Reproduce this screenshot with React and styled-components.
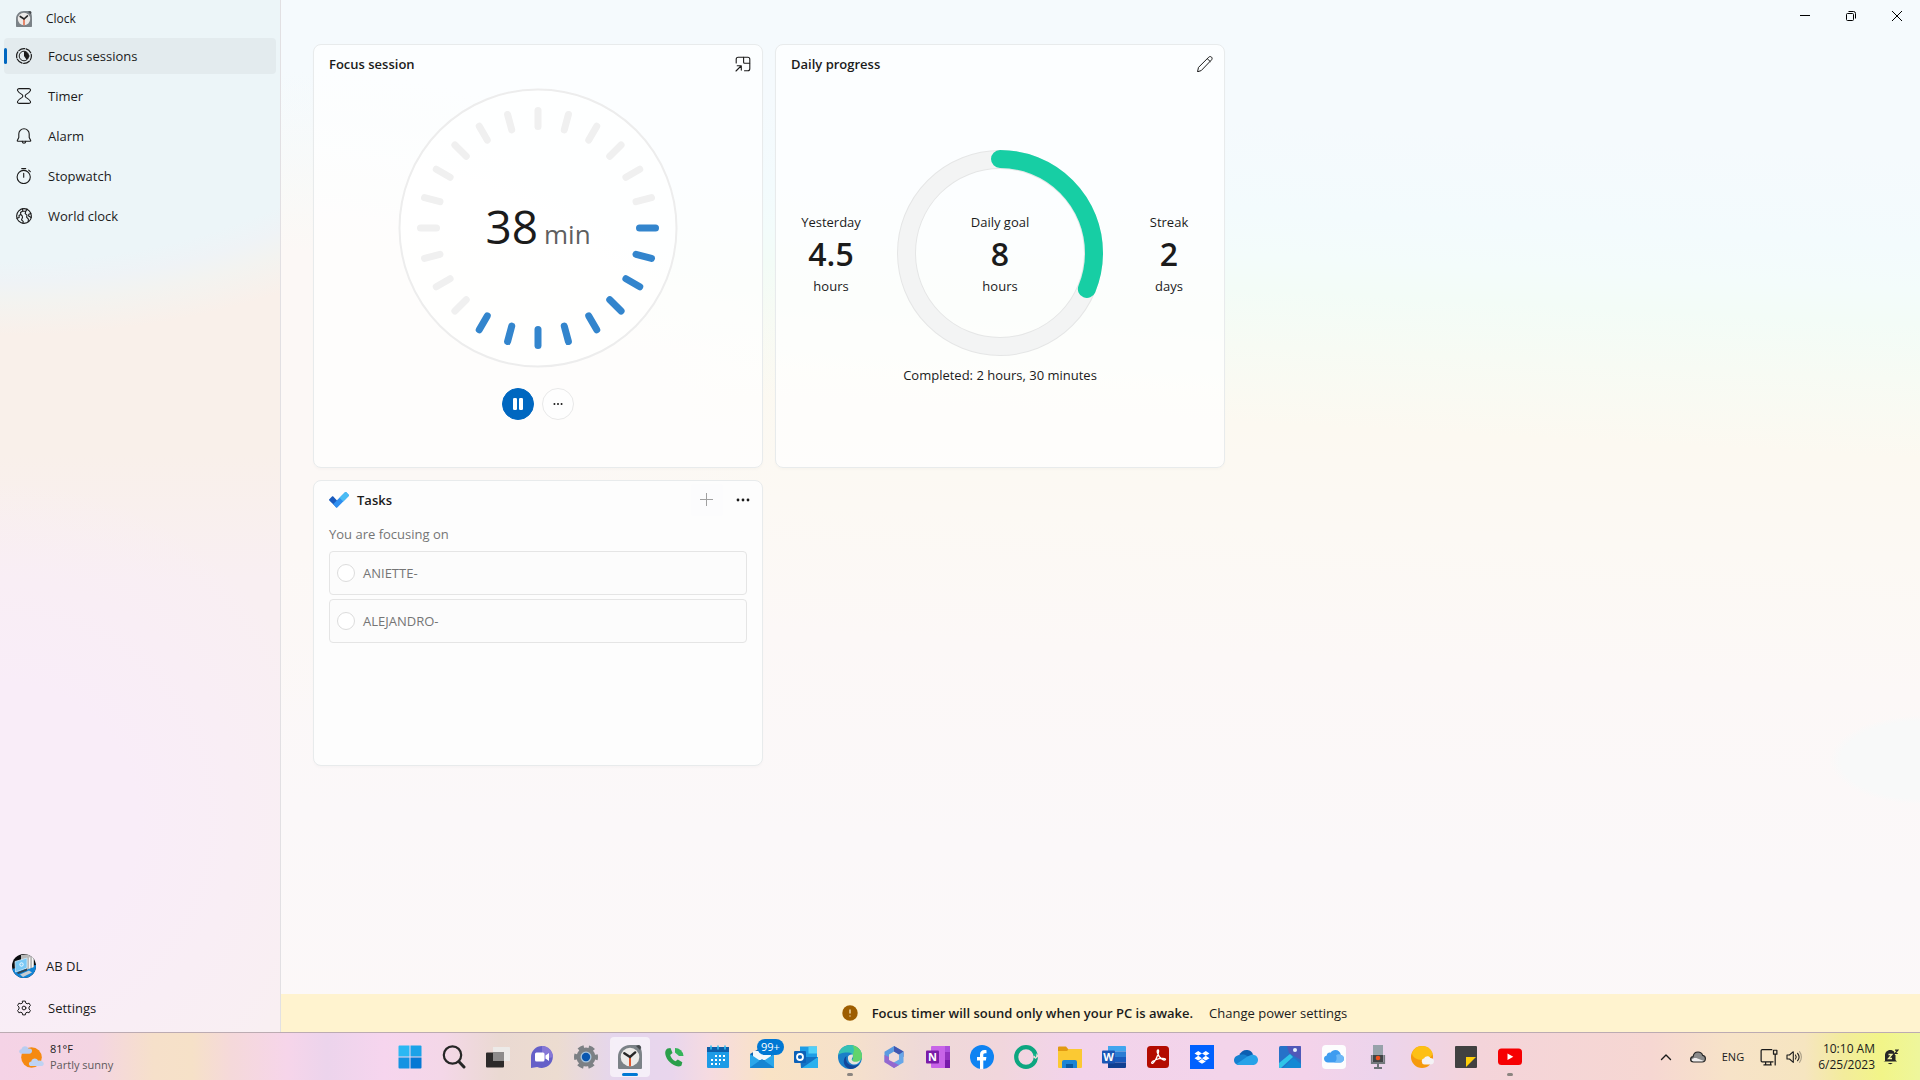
import React from "react"
import styled, { createGlobalStyle } from "styled-components"

const GlobalStyle = createGlobalStyle`
  * {
    box-sizing: border-box;
  }

  body {
    margin: 0;
    font-family: "Open Sans", "Noto Sans", sans-serif;
    font-size: 13px;
    line-height: 20px;
    color: #1b1b1b;
  }

  button {
    font: inherit;
    color: inherit;
    background: none;
    border: none;
    padding: 0;
    cursor: pointer;
  }

  svg {
    display: block;
    flex: none;
  }
`

const Desktop = styled.div`
  min-height: 100vh;
  display: flex;
  flex-direction: column;
`

const AppWindow = styled.div`
  flex: 1;
  display: grid;
  grid-template-columns: 281px 1fr;
`

/* sidebar */

const Sidebar = styled.aside`
  display: flex;
  flex-direction: column;
  padding-bottom: 6px;
  border-right: 1px solid #e2e0e3;
  background: radial-gradient(
      ellipse 560px 335px at 10px 0,
      #ecf5f8 0%,
      #ecf5f8 78%,
      #eff3f6 84%,
      #f3f3f0 90%,
      rgba(249, 240, 235, 0) 100%
    ),
    radial-gradient(
      circle 340px at 0 820px,
      #f9edf8 0%,
      #f9edf8 40%,
      rgba(249, 239, 243, 0) 100%
    ),
    linear-gradient(#f9f0ea 0%, #f9f0ea 44%, #f9eff2 56%, #f9eff2 100%);
`

const AppTitle = styled.div`
  display: flex;
  align-items: center;
  gap: 14px;
  height: 38px;
  padding-left: 16px;
  font-size: 12px;
`

const Nav = styled.nav`
  flex: 1;
  display: flex;
  flex-direction: column;
  gap: 4px;
  padding: 0 4px;
`

const NavItem = styled.a`
  position: relative;
  display: flex;
  align-items: center;
  gap: 16px;
  height: 36px;
  padding-left: 12px;
  border-radius: 4px;
  color: inherit;
  text-decoration: none;
  background: ${props => (props.$active ? "#e3ebee" : "transparent")};

  &::before {
    content: "";
    display: ${props => (props.$active ? "block" : "none")};
    position: absolute;
    left: 0;
    top: 10px;
    width: 3px;
    height: 16px;
    border-radius: 2px;
    background: #0067c0;
  }
`

const SidebarFooter = styled.div`
  display: flex;
  flex-direction: column;
  gap: 6px;
  padding: 0 4px;
`

const Profile = styled.button`
  display: flex;
  align-items: center;
  gap: 10px;
  height: 36px;
  padding-left: 8px;
  text-align: left;
`

/* main area */

const Main = styled.main`
  display: flex;
  flex-direction: column;
  background: radial-gradient(
      ellipse 90px 44px at 100% 760px,
      #f8f9f9 0%,
      #f8f9f9 88%,
      rgba(248, 249, 249, 0) 100%
    ),
    radial-gradient(
      ellipse 520px 330px at 0 400px,
      #fcf8f6 0%,
      #fcf8f6 45%,
      rgba(252, 248, 246, 0) 100%
    ),
    linear-gradient(
      183deg,
      #f5fafd 0%,
      #f5fafd 14%,
      #f3fbfd 22%,
      #f3fcfb 26%,
      #f3fcf7 29%,
      #f7fbf4 34%,
      #fcf9f1 41%,
      #fcf9f4 50%,
      #fcf8f7 62%,
      #fbf8f9 80%,
      #fcf8f8 100%
    );
`

const TitleBar = styled.header`
  display: flex;
  justify-content: flex-end;
  height: 32px;
`

const CaptionButton = styled.button`
  width: 46px;
  height: 32px;
  display: grid;
  place-items: center;
`

const Cards = styled.div`
  flex: 1;
  display: grid;
  grid-template-columns: repeat(auto-fit, 450px);
  grid-auto-rows: max-content;
  gap: 12px;
  max-width: 980px;
  padding: 12px 32px;
`

const CardStyled = styled.section`
  display: flex;
  flex-direction: column;
  min-height: ${props => (props.$compact ? "286px" : "424px")};
  border: 1px solid #e8ebec;
  border-radius: 8px;
  background: ${props =>
    props.$compact ? "#fdfdfd" : "rgba(255, 255, 255, 0.7)"};
  box-shadow: 0 2px 3px rgba(0, 0, 0, 0.02);
`

const CardHeader = styled.div`
  display: flex;
  align-items: center;
  height: 38px;
  padding: 0 3px 0 15px;
`

const CardTitle = styled.h2`
  flex: 1;
  display: flex;
  align-items: center;
  gap: 8px;
  margin: 0;
  font-size: 13px;
  font-weight: 600;
`

const SquareButton = styled.button`
  width: 32px;
  height: 32px;
  margin-left: 4px;
  display: grid;
  place-items: center;
  border-radius: 4px;
  background: ${props => (props.$subtle ? "#fcfcfd" : "transparent")};
`

const Dial = styled.div`
  display: grid;
  place-items: center;
  margin-top: 5px;

  > * {
    grid-area: 1 / 1;
  }
`

const TimeLeft = styled.div`
  display: flex;
  align-items: baseline;
  gap: 6px;
  padding-top: 4px;
  font-size: 46px;
  line-height: 60px;
`

const TimeUnit = styled.span`
  font-size: 26px;
  color: #5f5f5f;
`

const DialControls = styled.div`
  display: flex;
  justify-content: center;
  gap: 8px;
  margin-top: 20px;
`

const RoundButton = styled.button`
  width: 32px;
  height: 32px;
  display: grid;
  place-items: center;
  border-radius: 50%;
  border: 1px solid ${props => (props.$primary ? "#0067c0" : "#e9e9e9")};
  background: ${props => (props.$primary ? "#0067c0" : "#fefefe")};
`

const ProgressRow = styled.div`
  display: flex;
  justify-content: space-between;
  align-items: center;
  margin-top: 67px;
  padding: 0 11px;
`

const Stat = styled.div`
  width: 88px;
  padding-top: 2px;
  text-align: center;
`

const StatValue = styled.div`
  font-size: 32px;
  font-weight: 600;
  line-height: 44px;
`

const Ring = styled.div`
  display: grid;
  place-items: center;

  > * {
    grid-area: 1 / 1;
  }
`

const Completed = styled.p`
  margin: 9px 0 0;
  text-align: center;
`

const FocusingOn = styled.p`
  margin: 5px 15px 7px;
  color: #757575;
`

const TaskList = styled.ul`
  display: flex;
  flex-direction: column;
  gap: 4px;
  margin: 0;
  padding: 0 15px;
  list-style: none;
`

const TaskRow = styled.label`
  display: flex;
  align-items: center;
  gap: 8px;
  height: 44px;
  padding-left: 7px;
  border: 1px solid #e5e5e5;
  border-radius: 4px;
  background: #fcfcfc;
  color: #757575;
`

const TaskCheck = styled.input.attrs({ type: "checkbox" })`
  appearance: none;
  width: 18px;
  height: 18px;
  margin: 0;
  border: 1px solid #dcdcdc;
  border-radius: 50%;
  background: #fff;
`

const InfoBar = styled.div`
  display: flex;
  align-items: center;
  justify-content: center;
  gap: 16px;
  height: 38px;
  padding-right: 12px;
  background: #fff3cf;
`

const InfoMessage = styled.strong`
  display: flex;
  align-items: center;
  gap: 14px;
  font-weight: 600;
`

/* taskbar */

const TaskbarStyled = styled.footer`
  display: grid;
  grid-template-columns: 1fr auto 1fr;
  align-items: center;
  height: 48px;
  border-top: 1px solid #bcabb2;
  font-size: 11px;
  line-height: 16px;
  background: linear-gradient(
    90deg,
    #f5d3e6 0%,
    #f4d5e2 5%,
    #f6e0ca 8%,
    #f6e1c8 10%,
    #f5d9da 12%,
    #f6d5ea 15%,
    #ecd4ec 17%,
    #f6d5ee 20%,
    #f4d7e8 23%,
    #ead9d2 26%,
    #ecdcd0 29%,
    #e5d6ed 32%,
    #e9d6ed 35%,
    #f6dbe0 37%,
    #f9e3c5 40%,
    #f6e1ca 44%,
    #eed9d8 48%,
    #f1d6dc 52%,
    #f2d3eb 56%,
    #f3d4ea 64%,
    #f4d3ea 68%,
    #ecd4ec 72%,
    #f4d4da 77%,
    #f6d7d2 86%,
    #f7e3c8 90%,
    #f6e5c0 94%,
    #f3ec9c 96%,
    #f2f588 98%,
    #eef69c 100%
  );
`

const Weather = styled.button`
  display: flex;
  align-items: center;
  gap: 6px;
  padding-left: 18px;
  line-height: 16px;
  text-align: left;
`

const Muted = styled.div`
  color: #5f5a5c;
`

const AppStrip = styled.div`
  display: flex;
  gap: 4px;
`

const AppButton = styled.button`
  position: relative;
  width: 40px;
  height: 40px;
  display: grid;
  place-items: center;
  border-radius: 4px;
  background: ${props =>
    props.$active ? "rgba(255, 255, 255, 0.6)" : "transparent"};

  &::after {
    content: "";
    display: ${props => (props.$active || props.$running ? "block" : "none")};
    position: absolute;
    bottom: 1px;
    left: 50%;
    width: ${props => (props.$active ? "16px" : "6px")};
    height: 3px;
    border-radius: 2px;
    transform: translateX(-50%);
    background: ${props => (props.$active ? "#0078d4" : "#8b8580")};
  }
`

const Badge = styled.span`
  position: absolute;
  top: 2px;
  left: 15px;
  padding: 0 4px;
  border-radius: 8px;
  background: #0078d4;
  color: #fff;
  font-size: 11px;
  line-height: 16px;
`

const Tray = styled.div`
  display: flex;
  justify-content: flex-end;
  align-items: center;
  padding-right: 13px;
`

const TrayButton = styled.button`
  display: flex;
  align-items: center;
  gap: 8px;
  padding: 0 8px;
  line-height: 16px;
`

const DateTime = styled.div`
  font-size: 12px;
  text-align: right;
`

/* line icons */

const LineIcon = ({ size = 16, width = 1, children }) => (
  <svg
    width={size}
    height={size}
    viewBox="0 0 16 16"
    fill="none"
    stroke="currentColor"
    strokeWidth={width}
    strokeLinecap="round"
    strokeLinejoin="round"
    aria-hidden="true"
  >
    {children}
  </svg>
)

const FocusIcon = () => (
  <LineIcon>
    <circle cx="8" cy="8" r="7.4" strokeDasharray="6.2 1.55" strokeDashoffset="2" strokeWidth="1.2" />
    <circle cx="8" cy="8" r="4.8" />
    <path d="M8 3.5a4.5 4.5 0 0 1 2.6 8.2L8 8z" fill="currentColor" stroke="none" />
  </LineIcon>
)

const TimerIcon = () => (
  <LineIcon width="1.1">
    <path d="M3.5.6h9c1.9 0 2.300 1 1.900 2-.6 1.600-2.500 2.800-4.500 4-.9.6-.9 2.200 0 2.800 2 1.200 3.900 2.400 4.500 4 .4 1 0 2-1.900 2h-9c-1.900 0-2.300-1-1.900-2 .6-1.600 2.500-2.800 4.500-4 .9-.6.900-2.200 0-2.800-2-1.200-3.900-2.400-4.500-4-.4-1 0-2 1.900-2z" />
  </LineIcon>
)

const BellIcon = () => (
  <LineIcon width="1.1">
    <path d="M8 .8C5 .8 2.800 3.100 2.800 6v3.500l-1.500 3.100c-.1.300 0 .6.400.6h12.600c.4 0 .5-.3.400-.6l-1.500-3.100V6C13.200 3.100 11 .8 8 .8z" />
    <path d="M6.200 13.400c.2 1.300 1 1.900 1.800 1.900s1.600-.6 1.800-1.900" />
  </LineIcon>
)

const StopwatchIcon = () => (
  <LineIcon width="1.1">
    <circle cx="7.7" cy="9" r="6.6" />
    <path d="M5.700.6h4M7.700 5.300v4M12.700 2.200l1.600 1.500" />
  </LineIcon>
)

const WorldIcon = () => (
  <LineIcon width="1.1">
    <circle cx="8" cy="8" r="7.4" />
    <path d="M6.500.9l.3 2.100L4.500 4.500 4.800 6.500 3 7.500l.2 2-2.300.8M6.800 3l3 .2 1.200-2M9.800 3.200l-.6 2.400 1.800 1.600-.4 2 1.800 2-.2 2.500M14.800 5.500l-2 .8-.2 1.700 2.600 1.500M6.900 15.300l.3-2-1.700-1.400 1-2.400-.3-1.700-1.400-1.300" />
  </LineIcon>
)

const GearIcon = () => (
  <LineIcon>
    <circle cx="8" cy="8" r="1.900" />
    <path d="M6.700 1.100h2.600l.5 2 1.300.7 2-.6 1.300 2.300L13 7v2l1.400 1.500-1.300 2.300-2-.6-1.300.7-.5 2H6.700l-.5-2-1.300-.7-2 .6-1.300-2.300L3 9V7L1.600 5.500l1.300-2.300 2 .6 1.300-.7z" />
  </LineIcon>
)

const CompactIcon = () => (
  <LineIcon width="1.1">
    <path d="M1.200 7V3.200c0-1.200.8-2 2-2h9.600c1.200 0 2 .8 2 2v9.600c0 1.200-.8 2-2 2H9.500" />
    <path d="M8.600 1.400v4.800c0 .6.400 1 1 1h5M1 15l5-5M2.200 9.700h4.100v4.400" />
  </LineIcon>
)

const PencilIcon = () => (
  <LineIcon>
    <path d="M.6 15.400l.9-4L11.700 1.200c.8-.8 2-.8 2.800-.1.800.8.8 2 0 2.800L4.500 14.300zM10.300 2.700l2.900 2.800" />
  </LineIcon>
)

const Dots = ({ size }) => (
  <svg width={size} height="4" viewBox="0 0 14 4" fill="#1b1b1b" aria-hidden="true">
    <circle cx="2" cy="2" r="1.4" />
    <circle cx="7" cy="2" r="1.4" />
    <circle cx="12" cy="2" r="1.4" />
  </svg>
)

/* drawn logos */

const ClockLogo = ({ size = 24 }) => (
  <svg width={size} height={size} viewBox="0 0 24 24" aria-hidden="true">
    <path d="M0 12C0 5 5 0 12 0h9a3 3 0 0 1 2 4c1 2 1 5 1 8v11a1 1 0 0 1-1 1H1a1 1 0 0 1-1-1z" fill="#7b8287" />
    <path d="M18 1l3-1 2 2-1 3z" fill="#45494c" />
    <circle cx="12" cy="12" r="9.3" fill="#eceae8" />
    <path d="M11 12h2v8.500a1 1 0 0 1-2 0z" fill="#e2552d" />
    <path d="M6.300 8.200 12 12l5.200-4.600" fill="none" stroke="#262626" strokeWidth="2.4" strokeLinecap="round" />
  </svg>
)

const ToDoLogo = () => (
  <svg width="20" height="16" viewBox="0 0 20 16" aria-hidden="true">
    <path d="M.3 7.200 3 4.500c.4-.4.900-.4 1.300 0l6.700 7.200-3.500 3.700L.3 8.500c-.4-.4-.4-.9 0-1.300z" fill="#195abd" />
    <path d="M4.200 12 16 .3c.4-.4.900-.4 1.300 0l2.400 2.400c.4.4.4.9 0 1.300L8.300 15.500c-.4.4-.9.4-1.300 0z" fill="#2f8ff0" />
    <path d="M10.500 5.800 16 .3c.4-.4.900-.4 1.300 0l2.400 2.400c.4.4.4.9 0 1.300l-5.400 5.500z" fill="#4bbcf4" />
  </svg>
)

const Avatar = () => (
  <svg width="24" height="24" viewBox="0 0 24 24" aria-hidden="true">
    <defs>
      <clipPath id="avatar">
        <circle cx="12" cy="12" r="12" />
      </clipPath>
    </defs>
    <g clipPath="url(#avatar)">
      <rect width="24" height="24" fill="#0b0d10" />
      <path d="M0 15l8-2 16-2v13H0z" fill="#1183d6" />
      <path d="M9 1l8-1 5 3v10l-8 3-5-4z" fill="#b9b9b9" />
      <path d="M17 3.500l1.200-.3v11l-1.200.4zM20 3l1.200-.3v10.500l-1.200.4z" fill="#f6f6f6" />
      <path d="M3 7.500 15 4v10L3.500 18z" fill="#79c8f5" stroke="#d5e8f4" strokeWidth=".8" />
      <circle cx="9.5" cy="10.5" r="1.7" fill="none" stroke="#eef8ff" />
      <path d="M5 18.500 15 14.500v2L6 20z" fill="#34454f" />
      <path d="M8 20.500l9-4 3 2-9 4.500z" fill="#c7ccd1" />
    </g>
  </svg>
)

const logos = {
  windows: (
    <>
      <path d="M.5 1.500a1 1 0 0 1 1-1h10v11H.5z" fill="#2bb8f3" />
      <path d="M12.500.5h10a1 1 0 0 1 1 1v10h-11z" fill="#1ba2e8" />
      <path d="M.5 12.500h11v11h-10a1 1 0 0 1-1-1z" fill="#1593e2" />
      <path d="M12.500 12.500h11v10a1 1 0 0 1-1 1h-10z" fill="#0578d4" />
    </>
  ),
  search: (
    <g fill="none" stroke="#262626" strokeLinecap="round">
      <circle cx="10.5" cy="10" r="8.7" strokeWidth="2.2" />
      <path d="M17 16.700l5 5.300" strokeWidth="3" />
    </g>
  ),
  taskView: (
    <>
      <path d="M7 2h16a1 1 0 0 1 1 1v13H7z" fill="#eceae8" />
      <path d="M0 8.500a1 1 0 0 1 1-1h17v14a1 1 0 0 1-1 1H1a1 1 0 0 1-1-1z" fill="#2c2a2a" />
      <path d="M7 7.500h11V16H7z" fill="#8d8b8b" />
    </>
  ),
  chat: (
    <>
      <path d="M12 1a11 11 0 1 1-4.800 21L1 23V12A11 11 0 0 1 12 1z" fill="#6560c8" />
      <path d="M12 1a11 11 0 0 1 11 11l-11 3z" fill="#8577d6" />
      <rect x="5" y="7.5" width="9.5" height="9" rx="1.5" fill="#fff" />
      <path d="M15.500 10.500l3.500-2.500v8l-3.500-2.500z" fill="#fff" />
    </>
  ),
  settings: (
    <>
      <circle cx="12" cy="12" r="7" fill="none" stroke="#7c8084" strokeWidth="5" />
      <circle cx="12" cy="12" r="10.3" fill="none" stroke="#7c8084" strokeWidth="3.4" strokeDasharray="5.8 4.986" strokeDashoffset="2.9" />
      <circle cx="12" cy="12" r="5.5" fill="#a9c4dc" />
      <circle cx="12" cy="12" r="4.2" fill="#0a57b0" />
    </>
  ),
  phone: (
    <>
      <path d="M5.500 3.500 8.500 3l2 5-2.300 2c.8 3 2.600 5 5.300 6.300l2.300-1.800 4.500 2.800-.8 3.200c-1.300 1-3.500 1.300-6 .3C7.500 18.500 3.500 13 3.200 8c0-2 .9-3.700 2.300-4.500z" fill="#2b9f4b" />
      <path d="M13 3a8.500 8.500 0 0 1 8.500 8H17l-4-3.500z" fill="#34b45a" />
    </>
  ),
  calendar: (
    <>
      <path d="M1 3h22v19a1 1 0 0 1-1 1H2a1 1 0 0 1-1-1z" fill="#1e9be6" />
      <path d="M1 2h22v5H1z" fill="#0e5ea8" />
      <path d="M5 .5v4M12 .5v4M19 .5v4" stroke="#35bdf0" strokeWidth="1.6" />
      <path d="M9 11h10M5 15h14M5 19h9" stroke="#fff" strokeWidth="2" strokeDasharray="2 2" />
    </>
  ),
  mail: (
    <>
      <path d="M0 9 12 2l12 7v13a1 1 0 0 1-1 1H1a1 1 0 0 1-1-1z" fill="#0f62ae" />
      <path d="M3 6h18v9H3z" fill="#f4f8fb" />
      <path d="M0 9l12 8 12-8v13a1 1 0 0 1-1 1H1a1 1 0 0 1-1-1z" fill="#2ba7ea" />
      <path d="M0 22.500 12 14l12 8.500-1 .5H1z" fill="#1585d2" />
    </>
  ),
  outlook: (
    <>
      <path d="M6 1.500h17v13H6z" fill="#1e9de6" />
      <path d="M14.500 1.500H23v7h-8.500z" fill="#50d0f8" />
      <path d="M6 12h18v10a1 1 0 0 1-1 1H7z" fill="#1372c4" />
      <path d="M24 12v11L8 23z" fill="#2ab0ee" />
      <rect y="6" width="12" height="12" rx="1" fill="#0c61b8" />
      <circle cx="6" cy="12" r="3" fill="none" stroke="#fff" strokeWidth="1.8" />
    </>
  ),
  edge: (
    <>
      <circle cx="12" cy="12" r="12" fill="#1a7fc8" />
      <path d="M.3 10C1.500 3.500 6.500 0 12 0c7 0 12 5 12 11 0 4-3 6-6.500 6-2.500 0-4-1-3-2.500 2-3 .5-7-4-7C6 7.500 2 8 .3 10z" fill="#35c1b4" />
      <path d="M14 .2c6 1 10 5.500 10 10.800 0 4-3 6-6.500 6-2.500 0-4-1-3-2.500 1-1.500 1-3.500.2-5C16 7 17 3 14 .2z" fill="#62d36c" />
      <path d="M8.500 11c-1.500 5 1.500 9.500 7 9.500 2.500 0 4.500-.6 6-1.500A12 12 0 0 1 12 24C5 22 4 14 8.500 11z" fill="#12479a" />
      <path d="M14.700 9.500c1 3-1.700 4-.7 5.700 1.200 2 6 2.300 8.500-.2-1 3-4 5-7 4.500-4-.5-6-4-5.500-7.500.3-1.600 2-2.800 4.700-2.500z" fill="#e8e3dd" />
    </>
  ),
  m365: (
    <>
      <path d="M12 1 21.500 6.500 17 9.500l-5-3-5 3v6L2.500 17V6.700z" fill="#5a9be0" />
      <path d="M12 1l9.500 5.500V12L17 9.500l-5-3z" fill="#4257b0" />
      <path d="M21.500 6.500v11L12 23l-4.500-3 9.500-5.500v-5z" fill="#67a7e8" />
      <path d="M2.500 10v7.300L12 23l5-3-10-5v-3z" fill="#9468cf" />
      <circle cx="12" cy="12" r="3.9" fill="#efdcdc" />
    </>
  ),
  onenote: (
    <>
      <rect x="5" y="1" width="19" height="22" rx="1" fill="#c864e8" />
      <path d="M19 1h5v6h-5z" fill="#ad4fdc" />
      <path d="M19 7h5v8h-5z" fill="#9332bf" />
      <path d="M19 15h5v8h-5z" fill="#7719aa" />
      <rect y="5.5" width="13" height="13" rx="1" fill="#7a1ba8" />
      <text x="6.5" y="16" textAnchor="middle" fontSize="11" fontWeight="700" fill="#fff">
        N
      </text>
    </>
  ),
  facebook: (
    <>
      <circle cx="12" cy="12" r="12" fill="#0f83f2" />
      <path d="M10 24v-8.500H7V12h3V9.500C10 6.500 11.800 5 14.500 5c1 0 2 .2 2 .2v3h-1.400c-1.400 0-1.800.8-1.800 1.700V12h3.100l-.5 3.500h-2.600V24z" fill="#fff" />
    </>
  ),
  sync: (
    <>
      <circle cx="12" cy="12" r="9.8" fill="none" stroke="#0da680" strokeWidth="4.2" />
      <path d="M19 12l3.500-3.500L25 11l-3.500 3z" fill="#f0dcda" />
      <path d="M18.500 8.500l4 .2-.6 3.800z" fill="#12b78e" />
    </>
  ),
  explorer: (
    <>
      <path d="M0 2.500a1 1 0 0 1 1-1h7l2.500 3H24V8H0z" fill="#e29a12" />
      <path d="M0 6h9l2-2h12a1 1 0 0 1 1 1v17a1 1 0 0 1-1 1H1a1 1 0 0 1-1-1z" fill="#fbc933" />
      <path d="M4 23v-6a2 2 0 0 1 2-2h11a2 2 0 0 1 2 2v6z" fill="#1c84d4" />
      <path d="M8 23v-4h7v4z" fill="#0a5aa0" />
    </>
  ),
  word: (
    <>
      <path d="M6 1h17a1 1 0 0 1 1 1v4.500H6z" fill="#41a5ee" />
      <path d="M6 6.500h18V12H6z" fill="#2b7cd3" />
      <path d="M6 12h18v5.500H6z" fill="#185abd" />
      <path d="M6 17.500h18V22a1 1 0 0 1-1 1H6z" fill="#103f91" />
      <rect y="5.5" width="13" height="13" rx="1" fill="#1a56b5" />
      <text x="6.5" y="16" textAnchor="middle" fontSize="11" fontWeight="700" fill="#fff">
        W
      </text>
    </>
  ),
  acrobat: (
    <>
      <rect x="1" y="1" width="22" height="22" rx="3.5" fill="#b30b00" />
      <path d="M12 5c-2 0 0 6 3 8.500 2 1.700 4.500 2 4.500.8 0-1.500-6-1-9 .2-3 1-5.500 2.600-4.800 3.700.8 1 3-1.700 4.500-4.700C12 10 13.500 5 12 5z" fill="none" stroke="#fff" strokeWidth="1.3" />
    </>
  ),
  dropbox: (
    <>
      <rect width="24" height="24" fill="#0061fe" />
      <path d="M8.200 6 4.500 8.400l3.700 2.400L12 8.400zm7.600 0L12 8.400l3.800 2.400 3.700-2.400zM8.200 10.800l-3.700 2.400 3.700 2.400 3.800-2.400zm7.600 0L12 13.200l3.800 2.400 3.700-2.400zM8.200 16.400l3.800 2.400 3.800-2.400L12 14z" fill="#fff" />
    </>
  ),
  onedrive: (
    <>
      <path d="M5 10.500C6.500 6.500 10 4.500 13.500 5c3 .5 4.700 2 5.500 4.500l-5 4z" fill="#0c5fb2" />
      <path d="M6 10c2.500-.8 5-.3 7 1l6 3.700L8 20H5.500C2.500 20 0 18 0 15.200 0 12.300 2.600 10 6 10z" fill="#1580d0" />
      <path d="M13.500 11.500 17 10c4-.8 7 1.700 7 5 0 2.800-2.300 5-5 5H5.500c-1.200 0-2-.3-3-1z" fill="#27a2e8" />
    </>
  ),
  photos: (
    <>
      <rect x="1" y="1" width="22" height="22" rx="1.5" fill="#2672c8" />
      <path d="M9 1h13a1 1 0 0 1 1 1v13L11 8z" fill="#5058b8" />
      <path d="M1 18l11-9 3 3-12 11H2a1 1 0 0 1-1-1z" fill="#2fc4e8" />
      <path d="M5 23l9-9a2 2 0 0 1 3 0l6 5v3a1 1 0 0 1-1 1z" fill="#1389d4" />
      <circle cx="17" cy="5" r="2" fill="#e6f2fc" />
    </>
  ),
  icloud: (
    <>
      <rect width="24" height="24" rx="4" fill="#fdfdfe" />
      <path d="M6 17.500c-2 0-4-1.500-4-3.700 0-1.800 1.200-3 2.700-3.300.2-2.200 2-3.300 3.800-2.800C9.700 5.800 11.500 5 13.300 5c3 0 5.200 2 5.500 5 2 .3 3.200 1.900 3.200 3.800 0 2-1.700 3.700-3.800 3.700z" fill="#3f9cf0" />
      <path d="M12 17.500c3-1 3-5 2-7 2-2 4.500-1 4.800-.5 2 .3 3.200 1.900 3.200 3.800 0 2-1.700 3.700-3.800 3.700z" fill="#6db8f6" />
    </>
  ),
  recorder: (
    <>
      <path d="M7 0h10v10H7z" fill="#97a2aa" />
      <path d="M7 10h10v7H7z" fill="#414447" />
      <circle cx="12" cy="13" r="2.3" fill="#f0501c" />
      <path d="M5.800 10v8h12.400v-8" fill="none" stroke="#73797d" strokeWidth="1.8" />
      <path d="M12 18v4M8 23h8" stroke="#6d7378" strokeWidth="2" />
    </>
  ),
  weather: (
    <>
      <circle cx="12" cy="12" r="11" fill="#f59a0c" />
      <path d="M2 8a11 11 0 0 1 20.500 0c0 4-5 7-10.500 7S2 12 2 8z" fill="#fdc014" />
      <path d="M14.500 19.500a3.200 3.200 0 0 1-.2-6.300c1-2.500 5-2.700 6-.2 2 0 3.700 1.200 3.700 3.200s-1.500 3.300-3.500 3.300z" fill="#f4f3f6" />
    </>
  ),
  sticky: (
    <>
      <rect x="1" y="1" width="22" height="22" rx="1" fill="#414141" />
      <path d="M12 12h10L12 22z" fill="#ffcf0a" />
    </>
  ),
  youtube: (
    <>
      <rect y="3.5" width="24" height="16.5" rx="3.5" fill="#f60002" />
      <path d="M9.500 8.500v6.500l5.800-3.200z" fill="#fff" />
    </>
  ),
}

const apps = [
  { id: "windows", label: "Start" },
  { id: "search", label: "Search" },
  { id: "taskView", label: "Task View" },
  { id: "chat", label: "Chat" },
  { id: "settings", label: "Settings" },
  { id: "clock", label: "Clock", active: true },
  { id: "phone", label: "Phone" },
  { id: "calendar", label: "Calendar" },
  { id: "mail", label: "Mail", badge: "99+" },
  { id: "outlook", label: "Outlook" },
  { id: "edge", label: "Edge", running: true },
  { id: "m365", label: "Microsoft 365" },
  { id: "onenote", label: "OneNote" },
  { id: "facebook", label: "Facebook" },
  { id: "sync", label: "Sync" },
  { id: "explorer", label: "File Explorer" },
  { id: "word", label: "Word" },
  { id: "acrobat", label: "Acrobat" },
  { id: "dropbox", label: "Dropbox" },
  { id: "onedrive", label: "OneDrive" },
  { id: "photos", label: "Photos" },
  { id: "icloud", label: "iCloud" },
  { id: "recorder", label: "Voice Recorder" },
  { id: "weather", label: "Weather" },
  { id: "sticky", label: "Sticky Notes" },
  { id: "youtube", label: "YouTube", running: true },
]

const navItems = [
  { label: "Focus sessions", Icon: FocusIcon, active: true },
  { label: "Timer", Icon: TimerIcon },
  { label: "Alarm", Icon: BellIcon },
  { label: "Stopwatch", Icon: StopwatchIcon },
  { label: "World clock", Icon: WorldIcon },
]

const tasks = ["ANIETTE-", "ALEJANDRO-"]

const TICKS = 24
const FIRST_ACTIVE_TICK = 6
const LAST_ACTIVE_TICK = 14

const FocusDial = () => (
  <svg width="280" height="280" viewBox="0 0 280 280" aria-hidden="true">
    <circle cx="140" cy="140" r="138.5" fill="rgba(255, 255, 255, 0.7)" stroke="#ededed" strokeWidth="2" />
    {Array.from({ length: TICKS }, (_, i) => (
      <line
        key={i}
        x1="140"
        y1="22.5"
        x2="140"
        y2="38.5"
        strokeWidth="7"
        strokeLinecap="round"
        stroke={
          i >= FIRST_ACTIVE_TICK && i <= LAST_ACTIVE_TICK ? "#3385cd" : "#f0f0f0"
        }
        transform={`rotate(${(360 / TICKS) * i} 140 140)`}
      />
    ))}
  </svg>
)

const GOAL_HOURS = 8
const DONE_HOURS = 2.5

const GoalRing = () => (
  <svg width="206" height="206" viewBox="0 0 206 206" fill="none" aria-hidden="true">
    <circle cx="103" cy="103" r="93.5" stroke="#e5e6e6" strokeWidth="19" />
    <circle cx="103" cy="103" r="93.5" stroke="#f3f4f4" strokeWidth="17" />
    <circle
      cx="103"
      cy="103"
      r="94"
      stroke="#17cea4"
      strokeWidth="18"
      strokeLinecap="round"
      pathLength={GOAL_HOURS}
      strokeDasharray={`${DONE_HOURS} ${GOAL_HOURS}`}
      transform="rotate(-90 103 103)"
    />
  </svg>
)

const StatBlock = ({ label, value, unit }) => (
  <Stat>
    <div>{label}</div>
    <StatValue>{value}</StatValue>
    <div>{unit}</div>
  </Stat>
)

const FocusCard = () => (
  <CardStyled>
    <CardHeader>
      <CardTitle>Focus session</CardTitle>
      <SquareButton aria-label="Keep on top">
        <CompactIcon />
      </SquareButton>
    </CardHeader>
    <Dial>
      <FocusDial />
      <TimeLeft>
        38 <TimeUnit>min</TimeUnit>
      </TimeLeft>
    </Dial>
    <DialControls>
      <RoundButton $primary aria-label="Pause">
        <svg width="12" height="12" viewBox="0 0 12 12" fill="#fff">
          <rect x="1" y="0" width="4" height="12" rx="1.2" />
          <rect x="7" y="0" width="4" height="12" rx="1.2" />
        </svg>
      </RoundButton>
      <RoundButton aria-label="More options">
        <Dots size="10" />
      </RoundButton>
    </DialControls>
  </CardStyled>
)

const ProgressCard = () => (
  <CardStyled>
    <CardHeader>
      <CardTitle>Daily progress</CardTitle>
      <SquareButton aria-label="Edit daily goal">
        <PencilIcon />
      </SquareButton>
    </CardHeader>
    <ProgressRow>
      <StatBlock label="Yesterday" value="4.5" unit="hours" />
      <Ring>
        <GoalRing />
        <StatBlock label="Daily goal" value="8" unit="hours" />
      </Ring>
      <StatBlock label="Streak" value="2" unit="days" />
    </ProgressRow>
    <Completed>Completed: 2 hours, 30 minutes</Completed>
  </CardStyled>
)

const TasksCard = () => (
  <CardStyled $compact>
    <CardHeader>
      <CardTitle>
        <ToDoLogo />
        Tasks
      </CardTitle>
      <SquareButton $subtle aria-label="Add a task">
        <svg width="14" height="14" viewBox="0 0 14 14" stroke="#a0a0a0">
          <path d="M6.500 0v13M0 6.500h13" />
        </svg>
      </SquareButton>
      <SquareButton aria-label="See more">
        <Dots size="14" />
      </SquareButton>
    </CardHeader>
    <FocusingOn>You are focusing on</FocusingOn>
    <TaskList>
      {tasks.map(task => (
        <li key={task}>
          <TaskRow>
            <TaskCheck />
            {task}
          </TaskRow>
        </li>
      ))}
    </TaskList>
  </CardStyled>
)

const Taskbar = () => (
  <TaskbarStyled>
    <Weather>
      <svg width="26" height="24" viewBox="0 0 26 24" aria-hidden="true">
        <circle cx="13.5" cy="12.5" r="10.3" fill="#f58a12" />
        <path d="M3.800 8.700C.4 8.700.4 4.500 3.500 4.300 4 .8 9 .2 10.300 3.500c3-.5 4.500 1.500 3.500 3.500-.4 1.200-1.300 1.700-2.300 1.700z" fill="#b9cdf0" />
        <path d="M13.500 21c-3.400 0-3.400-4.300-.2-4.600.5-3.300 5.500-3.900 6.800-.7 3-.5 5.700 1 5.700 3 0 1.700-1.300 2.300-2.500 2.300z" fill="#bfd3f3" />
      </svg>
      <div>
        <div>81°F</div>
        <Muted>Partly sunny</Muted>
      </div>
    </Weather>

    <AppStrip>
      {apps.map(({ id, label, active, running, badge }) => (
        <AppButton key={id} $active={active} $running={running} aria-label={label}>
          {id === "clock" ? (
            <ClockLogo />
          ) : (
            <svg width="24" height="24" viewBox="0 0 24 24" aria-hidden="true">
              {logos[id]}
            </svg>
          )}
          {badge && <Badge>{badge}</Badge>}
        </AppButton>
      ))}
    </AppStrip>

    <Tray>
      <TrayButton aria-label="Show hidden icons">
        <LineIcon width="1.4">
          <path d="M3.500 10.500 8 6l4.500 4.500" />
        </LineIcon>
      </TrayButton>
      <TrayButton aria-label="OneDrive">
        <svg width="16" height="16" viewBox="0 0 16 16">
          <path d="M3.500 13C1.800 13 .6 11.800.6 10.300c0-1.400 1-2.500 2.500-2.700C3.500 4.800 5.500 3 8 3c2.200 0 4 1.300 4.600 3.300 1.700.2 2.800 1.500 2.800 3.200 0 2-1.400 3.500-3.300 3.500z" fill="#8b8b8b" />
          <path d="M1.500 11c1.500-2 4-2.500 6-1.500l6.500 2.500c-.6.700-1.200 1-2 1H3.500c-1 0-2-.8-2-2z" fill="#f1efef" />
          <path d="M3.500 13C1.800 13 .6 11.800.6 10.300c0-1.400 1-2.500 2.500-2.700C3.500 4.800 5.500 3 8 3c2.200 0 4 1.300 4.600 3.300 1.700.2 2.800 1.500 2.800 3.200 0 2-1.400 3.500-3.300 3.500z" fill="none" stroke="#262626" strokeWidth="1.2" />
        </svg>
      </TrayButton>
      <TrayButton>ENG</TrayButton>
      <TrayButton aria-label="Network and volume">
        <LineIcon size={18} width="1.1">
          <path d="M10.500 1.500H2c-.6 0-1 .4-1 1v8.800c0 .6.4 1 1 1h9.600M5 12.300v2.500M3.500 15h6.500M12 2h3v3.500h-3zM13.500 5.500V15M9.500 12.300v2.500" />
        </LineIcon>
        <LineIcon width="1.1">
          <path d="M1 6v4h2.500l3.800 3.300V2.700L3.500 6zM9.500 6c.9 1.200.9 2.800 0 4M11.600 4.300c1.800 2.200 1.800 5.200 0 7.400" />
          <path d="M13.500 2.700c2.500 3 2.500 7.600 0 10.600" opacity=".35" />
        </LineIcon>
      </TrayButton>
      <TrayButton>
        <DateTime>
          <div>10:10 AM</div>
          <div>6/25/2023</div>
        </DateTime>
        <svg width="16" height="16" viewBox="0 0 16 16" aria-hidden="true">
          <path d="M2 12V6.500C2 3.300 4.200 1 7.200 1c3.300 0 5.300 2.300 5.300 5.500V11l1.500 1.500H.5z" fill="#262626" />
          <path d="M5 14h4.500c-.6 1.500-3.900 1.500-4.500 0z" fill="#262626" />
          <path d="M5.500 5.500h3.500L5.500 9.500H9" fill="none" stroke="#f2f3a0" strokeWidth="1.3" />
          <path d="M10.500 0H16v6h-4z" fill="#f1f48c" />
          <path d="M12 1.200h2.800L12 4.500h2.800" fill="none" stroke="#262626" strokeWidth="1.2" />
        </svg>
      </TrayButton>
    </Tray>
  </TaskbarStyled>
)

const App = () => (
  <Desktop>
    <GlobalStyle />
    <AppWindow>
      <Sidebar>
        <AppTitle>
          <ClockLogo size={16} />
          Clock
        </AppTitle>
        <Nav>
          {navItems.map(({ label, Icon, active }) => (
            <NavItem key={label} href="#" $active={active}>
              <Icon />
              {label}
            </NavItem>
          ))}
        </Nav>
        <SidebarFooter>
          <Profile>
            <Avatar />
            AB DL
          </Profile>
          <NavItem href="#">
            <GearIcon />
            Settings
          </NavItem>
        </SidebarFooter>
      </Sidebar>

      <Main>
        <TitleBar>
          <CaptionButton aria-label="Minimize">
            <svg width="10" height="10" viewBox="0 0 10 10" stroke="#000">
              <path d="M0 4.500h10" />
            </svg>
          </CaptionButton>
          <CaptionButton aria-label="Restore">
            <svg width="10" height="10" viewBox="0 0 10 10" fill="none" stroke="#000">
              <rect x=".5" y="2.5" width="7" height="7" rx="1" />
              <path d="M2.500.5h5a2 2 0 0 1 2 2v5" />
            </svg>
          </CaptionButton>
          <CaptionButton aria-label="Close">
            <svg width="10" height="10" viewBox="0 0 10 10" stroke="#000">
              <path d="M0 0l10 10M10 0 0 10" />
            </svg>
          </CaptionButton>
        </TitleBar>
        <Cards>
          <FocusCard />
          <ProgressCard />
          <TasksCard />
        </Cards>
        <InfoBar>
          <InfoMessage>
            <svg width="16" height="16" viewBox="0 0 16 16" aria-hidden="true">
              <circle cx="8" cy="8" r="7.7" fill="#9d5d00" />
              <path d="M8 4.500v4M8 10.500v1" stroke="#fff3cf" strokeWidth="1.2" />
            </svg>
            Focus timer will sound only when your PC is awake.
          </InfoMessage>
          <button>Change power settings</button>
        </InfoBar>
      </Main>
    </AppWindow>
    <Taskbar />
  </Desktop>
)

export default App
